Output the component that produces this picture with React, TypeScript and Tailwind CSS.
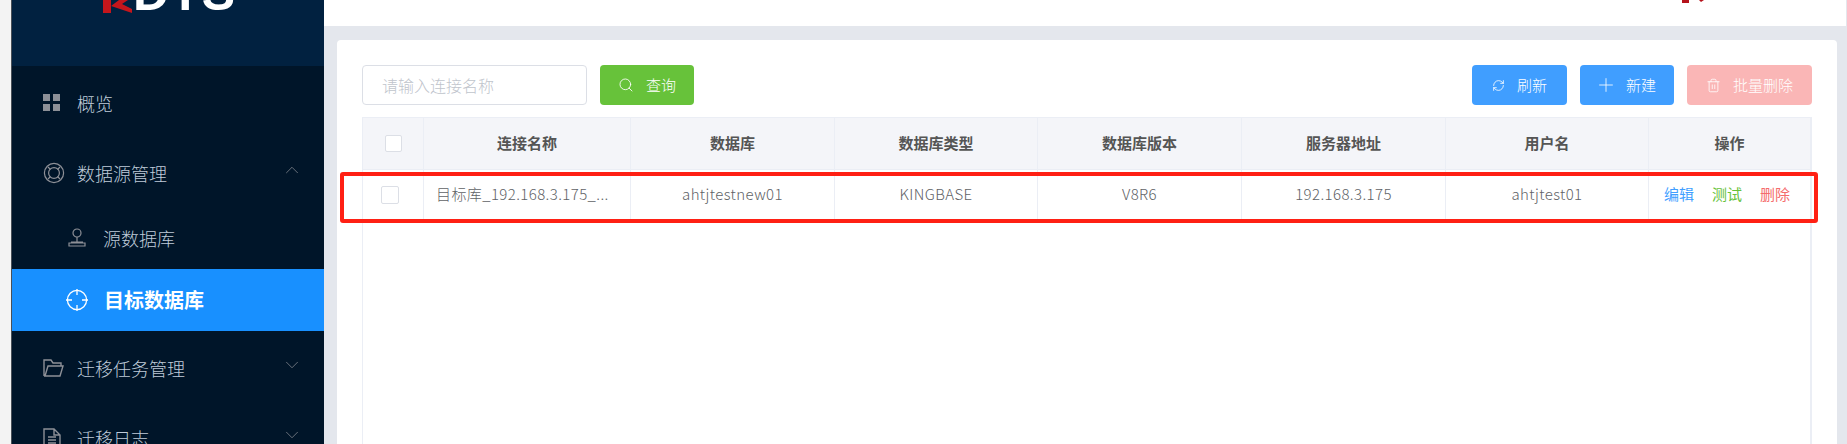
import React from "react";
import { ChevronDown, ChevronUp, Plus, RefreshCw, Search, Trash2 } from "lucide-react";

const CJK = "font-['Microsoft_YaHei','Noto_Sans_CJK_SC','Liberation_Sans',sans-serif]";

function GridIcon() {
  return (
    <svg width="18" height="18" viewBox="0 0 18 18" fill="#8d9097">
      <rect x="0" y="0" width="7" height="7" />
      <rect x="10" y="0" width="7" height="7" />
      <rect x="0" y="10" width="7" height="7" />
      <rect x="10" y="10" width="7" height="7" />
    </svg>
  );
}

function RingIcon() {
  return (
    <svg width="22" height="22" viewBox="0 0 22 22" fill="none" stroke="#8d9097" strokeWidth="1.2">
      <circle cx="11" cy="11" r="9.6" />
      <circle cx="11" cy="11" r="5.4" />
      <path d="M5 5l2.5 2.5M17 5l-2.5 2.5M5 17l2.5-2.5M17 17l-2.5-2.5" />
    </svg>
  );
}

function StampIcon() {
  return (
    <svg width="18" height="20" viewBox="0 0 18 20" fill="none" stroke="#8d9097" strokeWidth="1.2">
      <circle cx="9" cy="5" r="4" />
      <path d="M9 9v5M3 14h12M1 15h16v3H1z" />
    </svg>
  );
}

function TargetIcon() {
  return (
    <svg width="22" height="22" viewBox="0 0 22 22" fill="none" stroke="#fff" strokeWidth="1.3">
      <circle cx="11" cy="11" r="9.6" />
      <path d="M11 0v6M11 16v6M0 11h6M16 11h6" />
    </svg>
  );
}

function FolderIcon() {
  return (
    <svg width="21" height="18" viewBox="0 0 21 18" fill="none" stroke="#8d9097" strokeWidth="1.4">
      <path d="M1 17V1h7l2 3h8v3M1 17h16l3-10H5l-3 10" />
    </svg>
  );
}

function DocIcon() {
  return (
    <svg width="18" height="20" viewBox="0 0 18 20" fill="none" stroke="#8d9097" strokeWidth="1.4">
      <path d="M1 1h10l6 6v12H1zM11 1v6h6M5 9h8M5 12h8M5 15h8" />
    </svg>
  );
}

function MenuItem({
  icon,
  label,
  arrow,
}: {
  icon: React.ReactNode;
  label: string;
  arrow?: "up" | "down";
}) {
  return (
    <div className="flex items-center h-[70px] pl-[31px] pr-[21px] pb-[2px] shrink-0">
      <span className="w-[34px] flex items-center">{icon}</span>
      <span className="flex-1 text-[18px] text-[#bfcbd9] font-light">{label}</span>
      {arrow === "up" && <ChevronUp size={22} color="#8d9097" strokeWidth={0.8} className="mb-[6px]" />}
      {arrow === "down" && <ChevronDown size={22} color="#8d9097" strokeWidth={0.8} className="mb-[6px]" />}
    </div>
  );
}

function Sidebar() {
  return (
    <div className="w-[312px] h-full shrink-0 bg-[#001529] flex flex-col overflow-hidden">
      <div className="h-[66px] shrink-0 bg-[#012140] pl-[91px] overflow-hidden">
        <div className="flex items-end h-[13px] overflow-hidden">
          <svg width="29" height="13" viewBox="0 0 29 13" className="shrink-0">
            <path d="M0 0h8v13H0zM8 6l8-6h9l-6 4 10 5v4z" fill="#c4161c" />
          </svg>
          <span className="text-[50px] leading-[50px] font-bold text-white font-['Liberation_Sans',sans-serif] tracking-[1px] h-[50px] shrink-0 -mb-[5px] ml-[1px]">
            DTS
          </span>
        </div>
      </div>
      <div className="h-[3px] shrink-0" />
      <MenuItem icon={<GridIcon />} label="概览" />
      <MenuItem icon={<RingIcon />} label="数据源管理" arrow="up" />
      <div className="flex items-center h-[60px] pl-[56px] pb-[2px] shrink-0">
        <span className="w-[35px] flex items-center">
          <StampIcon />
        </span>
        <span className="text-[18px] text-[#bfcbd9] font-light">源数据库</span>
      </div>
      <div className="flex items-center h-[62px] pl-[54px] shrink-0 bg-[#1890ff]">
        <span className="w-[38px] flex items-center">
          <TargetIcon />
        </span>
        <span className="text-[20px] text-white font-bold">目标数据库</span>
      </div>
      <div className="h-[3px] shrink-0" />
      <MenuItem icon={<FolderIcon />} label="迁移任务管理" arrow="down" />
      <MenuItem icon={<DocIcon />} label="迁移日志" arrow="down" />
    </div>
  );
}

function ActionButton({
  color,
  width,
  icon,
  label,
}: {
  color: string;
  width: string;
  icon: React.ReactNode;
  label: string;
}) {
  return (
    <button className={`${color} ${width} h-[40px] rounded-[4px] flex items-center justify-center gap-[12px] text-[15px] text-white font-light`}>
      {icon}
      <span>{label}</span>
    </button>
  );
}

const HEADERS = ["连接名称", "数据库", "数据库类型", "数据库版本", "服务器地址", "用户名", "操作"];
const ROW = ["ahtjtestnew01", "KINGBASE", "V8R6", "192.168.3.175", "ahtjtest01"];
const COLS = "grid grid-cols-[61px_207px_204px_203px_204px_204px_203px_1fr]";

function Checkbox({ size }: { size: string }) {
  return <span className={`${size} rounded-[2px] border border-[#dcdfe6] bg-white`} />;
}

function DataTable() {
  return (
    <div className="flex-1 border-l border-r-2 border-[#ebeef5] text-[15px]">
      <div className={`${COLS} h-[53px] bg-[#f4f5f9] border-t border-b border-[#ebeef5] text-[#555] font-bold`}>
        <div className="flex items-center justify-center border-r border-[#ebeef5]">
          <Checkbox size="w-[17px] h-[17px]" />
        </div>
        {HEADERS.map((h, i) => (
          <div
            key={h}
            className={`flex items-center justify-center ${i < 6 ? "border-r border-[#ebeef5]" : ""}`}
          >
            {h}
          </div>
        ))}
      </div>
      <div className={`${COLS} h-[50px] border-b border-[#ebeef5] text-[#606266] font-light tracking-[0.4px]`}>
        <div className="flex items-center pl-[18px] border-r border-[#ebeef5]">
          <Checkbox size="w-[18px] h-[18px]" />
        </div>
        <div className="flex items-center pl-[12px] border-r border-[#ebeef5] whitespace-nowrap overflow-hidden">
          目标库_192.168.3.175_...
        </div>
        {ROW.map((c) => (
          <div key={c} className="flex items-center justify-center border-r border-[#ebeef5] whitespace-nowrap">
            {c}
          </div>
        ))}
        <div className="flex items-center pl-[15px] gap-[18px] tracking-normal font-normal">
          <span className="text-[#409eff]">编辑</span>
          <span className="text-[#67c23a]">测试</span>
          <span className="text-[#f56c6c]">删除</span>
        </div>
      </div>
    </div>
  );
}

export default function App() {
  return (
    <div className={`w-[1847px] h-[444px] flex overflow-hidden bg-[#f3f3f3] ${CJK}`}>
      <div className="w-[11px] shrink-0" />
      <div className="w-[1px] shrink-0 bg-[#4a5058]" />
      <Sidebar />
      <div className="flex-1 flex flex-col min-w-0 bg-[#e4e7ed] pr-[1px] relative">
        <div className="h-[26px] shrink-0 bg-white flex justify-end pr-[140px]">
          <svg width="26" height="3" viewBox="0 0 26 3" className="shrink-0">
            <path d="M2 0h7v3H2zM19 0h5l-3 2z" fill="#b5121b" />
          </svg>
        </div>
        <div className="flex-1 min-h-0 pt-[14px] pl-[13px] pr-[9px]">
          <div className="h-full bg-white rounded-t-[4px] pt-[25px] pl-[25px] pr-[25px] flex flex-col">
            <div className="flex items-center h-[40px] shrink-0">
              <div className="w-[225px] h-[40px] rounded-[4px] border border-[#dcdfe6] flex items-center pl-[19px] text-[16px] text-[#c0c4cc] font-light">
                请输入连接名称
              </div>
              <button className="ml-[13px] w-[94px] h-[40px] rounded-[4px] bg-[#67c23a] flex items-center justify-center gap-[12px] text-[15px] text-white font-light">
                <Search size={16} strokeWidth={1.3} />
                <span>查询</span>
              </button>
              <div className="flex-1" />
              <div className="flex gap-[13px]">
                <ActionButton color="bg-[#409eff]" width="w-[95px]" icon={<RefreshCw size={13} strokeWidth={1.5} />} label="刷新" />
                <ActionButton color="bg-[#409eff]" width="w-[94px]" icon={<Plus size={22} strokeWidth={0.9} className="-mx-[3px]" />} label="新建" />
                <ActionButton color="bg-[#fab6b6]" width="w-[125px]" icon={<Trash2 size={15} strokeWidth={1.3} />} label="批量删除" />
              </div>
            </div>
            <div className="h-[12px] shrink-0" />
            <DataTable />
          </div>
        </div>
        <div className="absolute left-[16px] top-[172px] w-[1478px] h-[51px] border-[4px] border-[#ff2014] rounded-[3px]" />
      </div>
    </div>
  );
}
